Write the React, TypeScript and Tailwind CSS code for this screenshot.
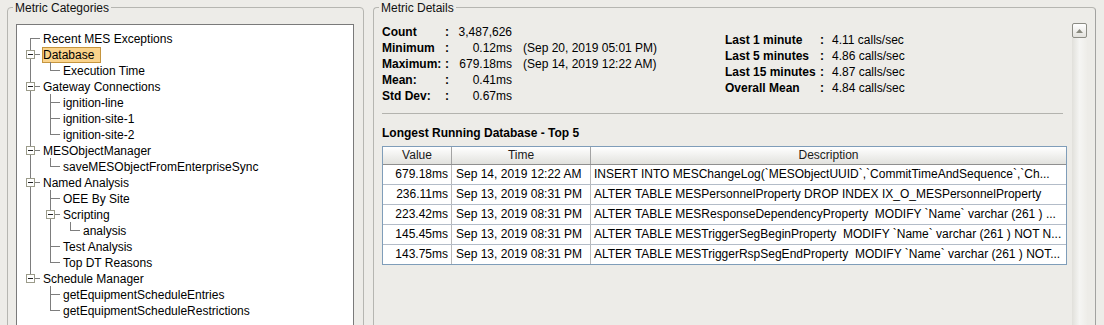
import React from 'react';

type TreeRow = {
  label: string;
  level: number;
  line: 'first' | 'full' | 'last';
  cont: number[];
  expander?: boolean;
  selected?: boolean;
};

const tree: TreeRow[] = [
  { label: 'Recent MES Exceptions', level: 0, line: 'first', cont: [] },
  { label: 'Database', level: 0, line: 'full', cont: [], expander: true, selected: true },
  { label: 'Execution Time', level: 1, line: 'last', cont: [0] },
  { label: 'Gateway Connections', level: 0, line: 'full', cont: [], expander: true },
  { label: 'ignition-line', level: 1, line: 'full', cont: [0] },
  { label: 'ignition-site-1', level: 1, line: 'full', cont: [0] },
  { label: 'ignition-site-2', level: 1, line: 'last', cont: [0] },
  { label: 'MESObjectManager', level: 0, line: 'full', cont: [], expander: true },
  { label: 'saveMESObjectFromEnterpriseSync', level: 1, line: 'last', cont: [0] },
  { label: 'Named Analysis', level: 0, line: 'full', cont: [], expander: true },
  { label: 'OEE By Site', level: 1, line: 'full', cont: [0] },
  { label: 'Scripting', level: 1, line: 'full', cont: [0], expander: true },
  { label: 'analysis', level: 2, line: 'last', cont: [0, 1] },
  { label: 'Test Analysis', level: 1, line: 'full', cont: [0] },
  { label: 'Top DT Reasons', level: 1, line: 'last', cont: [0] },
  { label: 'Schedule Manager', level: 0, line: 'last', cont: [], expander: true },
  { label: 'getEquipmentScheduleEntries', level: 1, line: 'full', cont: [] },
  { label: 'getEquipmentScheduleRestrictions', level: 1, line: 'last', cont: [] },
];

// lookup tables keep class names whole
const lineX = ['left-[13px]', 'left-[33px]', 'left-[53px]'];
const boxX = ['left-[9px]', 'left-[29px]', 'left-[49px]'];
const labelX = ['ml-[25px]', 'ml-[45px]', 'ml-[65px]'];

const stats = [
  { label: 'Count', value: '3,487,626', when: '' },
  { label: 'Minimum', value: '0.12ms', when: '(Sep 20, 2019 05:01 PM)' },
  { label: 'Maximum:', value: '679.18ms', when: '(Sep 14, 2019 12:22 AM)' },
  { label: 'Mean:', value: '0.41ms', when: '' },
  { label: 'Std Dev:', value: '0.67ms', when: '' },
];

const rates = [
  { label: 'Last 1 minute', value: '4.11 calls/sec' },
  { label: 'Last 5 minutes', value: '4.86 calls/sec' },
  { label: 'Last 15 minutes', value: '4.87 calls/sec' },
  { label: 'Overall Mean', value: '4.84 calls/sec' },
];

const slowest = [
  { value: '679.18ms', time: 'Sep 14, 2019 12:22 AM', desc: 'INSERT INTO MESChangeLog(`MESObjectUUID`,`CommitTimeAndSequence`,`Ch...' },
  { value: '236.11ms', time: 'Sep 13, 2019 08:31 PM', desc: 'ALTER TABLE MESPersonnelProperty DROP INDEX IX_O_MESPersonnelProperty' },
  { value: '223.42ms', time: 'Sep 13, 2019 08:31 PM', desc: 'ALTER TABLE MESResponseDependencyProperty  MODIFY `Name` varchar (261 ) ...' },
  { value: '145.45ms', time: 'Sep 13, 2019 08:31 PM', desc: 'ALTER TABLE MESTriggerSegBeginProperty  MODIFY `Name` varchar (261 ) NOT N...' },
  { value: '143.75ms', time: 'Sep 13, 2019 08:31 PM', desc: 'ALTER TABLE MESTriggerRspSegEndProperty  MODIFY `Name` varchar (261 ) NOT...' },
];

const Group = ({ title, className, children }: { title: string; className: string; children: React.ReactNode }) => (
  <div className={`relative shrink-0 h-[340px] border border-[#b6b6b1] rounded-[4px] ${className}`}>
    <span className="absolute -top-[7px] left-[5px] px-[2px] leading-[14px] bg-[#edece8] text-[#111]">{title}</span>
    {children}
  </div>
);

const TreeLine = ({ row }: { row: TreeRow }) => {
  const x = lineX[row.level];
  const seg =
    row.line === 'first' ? 'top-[8px] bottom-0' : row.line === 'last' ? 'top-0 h-[9px]' : 'top-0 bottom-0';
  return (
    <div className="relative h-[16px]">
      {row.cont.map(l => (
        <span key={l} className={`absolute top-0 bottom-0 w-px bg-[#7d7d7d] ${lineX[l]}`} />
      ))}
      <span className={`absolute w-px bg-[#7d7d7d] ${x} ${seg}`} />
      <span className={`absolute top-[8px] h-px w-[10px] bg-[#7d7d7d] ${x}`} />
      {row.expander && (
        <span className={`absolute top-[4px] w-[9px] h-[9px] border border-[#9b9b8a] bg-white flex items-center justify-center ${boxX[row.level]}`}>
          <span className="w-[5px] h-px bg-[#222]" />
        </span>
      )}
      <span
        className={`inline-block h-[16px] leading-[14px] border whitespace-nowrap ${labelX[row.level]} ${
          row.selected ? 'bg-[#fad38b] border-[#c5953e] pr-[6px]' : 'border-transparent'
        }`}
      >
        {row.label}
      </span>
    </div>
  );
};

export default function App() {
  return (
    <div className="w-[1104px] h-[325px] overflow-hidden bg-[#edece8] flex gap-[9px] pl-[7px] pt-[7px] text-[12px] text-black font-['Liberation_Sans',Arial,sans-serif]">
      <Group title="Metric Categories" className="w-[357px]">
        <div className="mt-[16px] ml-[8px] w-[338px] h-[320px] bg-white border border-[#7a7a7a] pt-[5px]">
          {tree.map(r => (
            <TreeLine key={r.label} row={r} />
          ))}
        </div>
      </Group>

      <Group title="Metric Details" className="w-[723px] border-r-[#a2a2a0]">
        <div className="flex pt-[15px] h-full">
          <div className="flex-1 pl-[8px] pr-[5px] pt-[1px]">
            <div className="flex">
              <div className="w-[343px] shrink-0">
                {stats.map(s => (
                  <div key={s.label} className="flex h-[16px] leading-[16px] whitespace-nowrap">
                    <span className="w-[63px] font-bold">{s.label}</span>
                    <span className="w-[13px] font-bold">:</span>
                    <span className="w-[54px] text-right">{s.value}</span>
                    {s.when && <span className="ml-[11px]">{s.when}</span>}
                  </div>
                ))}
              </div>
              <div className="mt-[8px]">
                {rates.map(r => (
                  <div key={r.label} className="flex h-[16px] leading-[16px] whitespace-nowrap">
                    <span className="w-[95px] font-bold">{r.label}</span>
                    <span className="w-[12px] font-bold">:</span>
                    <span>{r.value}</span>
                  </div>
                ))}
              </div>
            </div>

            <div className="mt-[9px] mr-[4px] h-px bg-[#b3b3ae]" />

            <div className="mt-[11px] h-[16px] leading-[16px] font-bold">Longest Running Database - Top 5</div>

            <div className="mt-[5px] border border-[#7f9db9] bg-white">
              <div className="flex h-[18px] leading-[17px] border-b border-[#8f8f8f] bg-linear-to-b from-white to-[#e2e2de] text-[#1a1a1a]">
                <div className="w-[69px] text-center border-r border-[#a3a3a3]">Value</div>
                <div className="w-[139px] text-center border-r border-[#a3a3a3]">Time</div>
                <div className="flex-1 text-center">Description</div>
              </div>
              {slowest.map((r, i) => (
                <div
                  key={i}
                  className="flex h-[20px] leading-[19px] border-b border-[#b3bcc8] last:border-b-0 last:h-[19px]"
                >
                  <div className="w-[69px] text-right pr-[3px] border-r border-[#b9b9b9]">{r.value}</div>
                  <div className="w-[139px] pl-[4px] border-r border-[#b9b9b9] whitespace-nowrap">{r.time}</div>
                  <div className="flex-1 pl-[3px] whitespace-pre overflow-hidden">{r.desc}</div>
                </div>
              ))}
            </div>
          </div>

          <div className="w-[15px] mr-[8px] flex flex-col">
            <div className="h-[15px] shrink-0 border border-[#8c8c84] rounded-[2px] bg-linear-to-b from-white to-[#e3e2dd] flex items-center justify-center">
              <svg width="7" height="4" viewBox="0 0 7 4">
                <path d="M3.5 0 L7 4 L0 4 Z" fill="#8a8a7f" />
              </svg>
            </div>
            <div className="flex-1 bg-linear-to-r from-[#e1e0db] via-[#f5f5f3] to-[#eeede9]" />
          </div>
        </div>
      </Group>
    </div>
  );
}
